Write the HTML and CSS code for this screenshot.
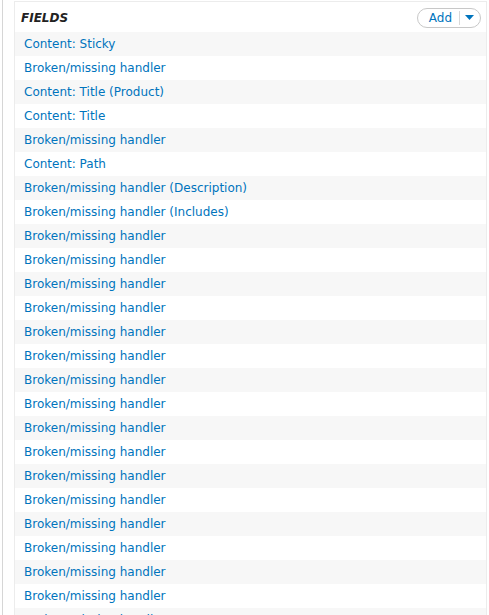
FILE: index.html
```html
<!DOCTYPE html>
<html>
<head>
<meta charset="utf-8">
<link rel="stylesheet" href="styles.css">
</head>
<body>
<div class="page">
  <div class="panel">
    <div class="panel-head">
      <h2 class="title">Fields</h2>
      <div class="add-btn">
        <span class="add-label">Add</span>
        <span class="add-sep"></span>
        <span class="add-caret"><svg width="9" height="5" viewBox="0 0 9 5"><path d="M0 0 H9 L4.5 5 Z" fill="#0074bd"/></svg></span>
      </div>
    </div>
    <ul class="rows">
      <li class="row odd"><a href="#">Content: Sticky</a></li>
      <li class="row"><a href="#">Broken/missing handler</a></li>
      <li class="row odd"><a href="#">Content: Title (Product)</a></li>
      <li class="row"><a href="#">Content: Title</a></li>
      <li class="row odd"><a href="#">Broken/missing handler</a></li>
      <li class="row"><a href="#">Content: Path</a></li>
      <li class="row odd"><a href="#">Broken/missing handler (Description)</a></li>
      <li class="row"><a href="#">Broken/missing handler (Includes)</a></li>
      <li class="row odd"><a href="#">Broken/missing handler</a></li>
      <li class="row"><a href="#">Broken/missing handler</a></li>
      <li class="row odd"><a href="#">Broken/missing handler</a></li>
      <li class="row"><a href="#">Broken/missing handler</a></li>
      <li class="row odd"><a href="#">Broken/missing handler</a></li>
      <li class="row"><a href="#">Broken/missing handler</a></li>
      <li class="row odd"><a href="#">Broken/missing handler</a></li>
      <li class="row"><a href="#">Broken/missing handler</a></li>
      <li class="row odd"><a href="#">Broken/missing handler</a></li>
      <li class="row"><a href="#">Broken/missing handler</a></li>
      <li class="row odd"><a href="#">Broken/missing handler</a></li>
      <li class="row"><a href="#">Broken/missing handler</a></li>
      <li class="row odd"><a href="#">Broken/missing handler</a></li>
      <li class="row"><a href="#">Broken/missing handler</a></li>
      <li class="row odd"><a href="#">Broken/missing handler</a></li>
      <li class="row"><a href="#">Broken/missing handler</a></li>
      <li class="row odd"><a href="#">Broken/missing handler</a></li>
      <li class="row"><a href="#">Broken/missing handler</a></li>
    </ul>
  </div>
</div>
</body>
</html>
```
FILE: styles.css
```css
html, body {
  margin: 0;
  padding: 0;
  background: #fff;
  height: 615px;
  overflow: hidden;
}
body {
  font-family: "DejaVu Sans", sans-serif;
}
.page {
  margin-left: 2px;
  border-left: 1px solid #d6d6d6;
  padding-left: 11px;
  padding-top: 1px;
  min-height: 700px;
}
.panel {
  width: 471px;
  border: 1px solid #ececec;
  border-bottom: none;
}
.panel-head {
  height: 30px;
  display: flex;
  align-items: center;
  justify-content: space-between;
  padding: 0 5px 0 6px;
}
.title {
  margin: 0;
  font-size: 12px;
  font-weight: bold;
  font-style: italic;
  text-transform: uppercase;
  color: #222;
  letter-spacing: 0;
  padding-top: 1px;
}
.add-btn {
  display: flex;
  align-items: center;
  height: 18px;
  border: 1px solid #c8c8c8;
  border-radius: 10px;
  padding: 0 6px 0 11px;
  background: #fff;
  margin-top: 1px;
}
.add-label {
  font-size: 12px;
  color: #0074bd;
  padding-right: 7px;
}
.add-sep {
  width: 1px;
  height: 14px;
  background: #d8d8d8;
}
.add-caret {
  display: flex;
  padding-left: 5px;
}
.rows {
  list-style: none;
  margin: 0;
  padding: 0;
}
.row {
  height: 24px;
  display: flex;
  align-items: center;
  padding-left: 9px;
}
.row.odd {
  background: #f7f7f7;
}
.row a {
  font-size: 12px;
  color: #0074bd;
  text-decoration: none;
}
```
